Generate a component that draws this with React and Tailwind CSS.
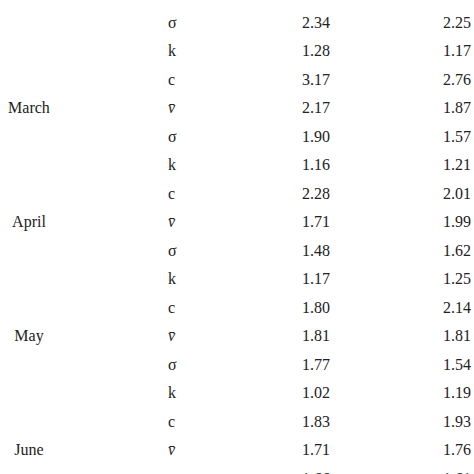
import React from "react";

const months = [
  { name: "", rows: [["σ", "2.34", "2.25"], ["k", "1.28", "1.17"], ["c", "3.17", "2.76"]] },
  { name: "March", rows: [["v", "2.17", "1.87"], ["σ", "1.90", "1.57"], ["k", "1.16", "1.21"], ["c", "2.28", "2.01"]] },
  { name: "April", rows: [["v", "1.71", "1.99"], ["σ", "1.48", "1.62"], ["k", "1.17", "1.25"], ["c", "1.80", "2.14"]] },
  { name: "May", rows: [["v", "1.81", "1.81"], ["σ", "1.77", "1.54"], ["k", "1.02", "1.19"], ["c", "1.83", "1.93"]] },
  { name: "June", rows: [["v", "1.71", "1.76"], ["σ", "1.66", "1.61"]] },
];

function Symbol({ s }) {
  if (s === "v") return <i>v&#772;</i>;
  return <span>{s}</span>;
}

export default function App() {
  // flatten: month label sits on the first row of its block
  const rows = [];
  months.forEach((m) => {
    m.rows.forEach((r, i) => rows.push({ label: i === 0 ? m.name : "", sym: r[0], a: r[1], b: r[2] }));
  });

  return (
    <div className="w-[474px] h-[474px] overflow-hidden bg-white text-[#222] text-[16px]" style={{ fontFamily: '"Liberation Serif", "Times New Roman", serif' }}>
      {/* header, cut off at the top */}
      <div className="h-[8.4px] flow-root">
        <div className="-mt-[17px] leading-4 font-bold pl-[13px]">Group</div>
      </div>

      {rows.map((r, i) => (
        <div key={i} className="grid grid-cols-[58px_228px_60px_81px_60px] h-[28.5px] items-center leading-none">
          <div className="text-center">{r.label}</div>
          <div className="pl-[110px]">
            <Symbol s={r.sym} />
          </div>
          <div className="text-center">{r.a}</div>
          <div />
          <div className="text-center">{r.b}</div>
        </div>
      ))}
    </div>
  );
}
